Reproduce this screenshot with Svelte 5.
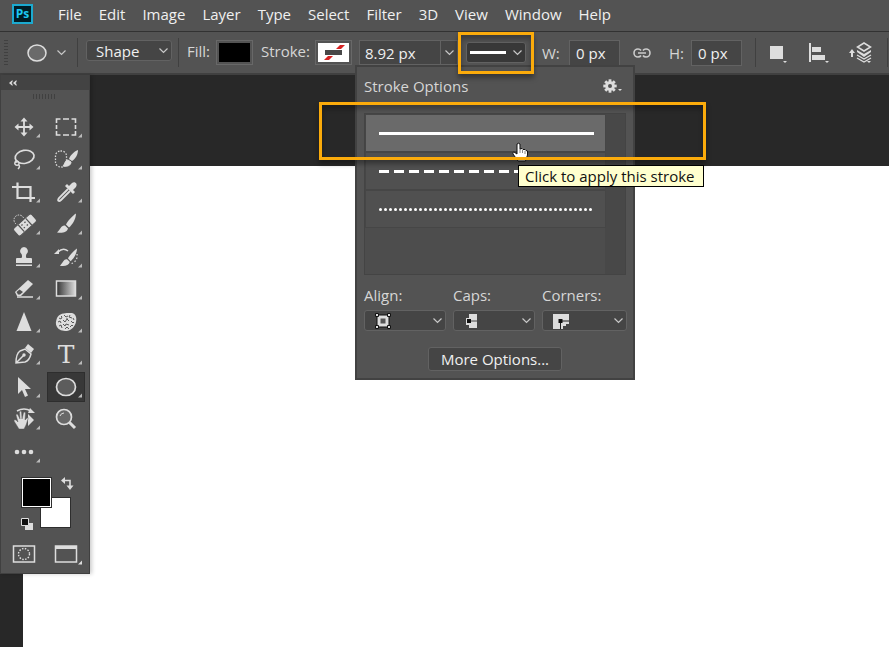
<script lang="ts">
    /**
     * Photo editor shell: menu bar, shape tool options, tool palette
     * and the stroke options popover.
     */

    const MENUS = [
        "File",
        "Edit",
        "Image",
        "Layer",
        "Type",
        "Select",
        "Filter",
        "3D",
        "View",
        "Window",
        "Help",
    ];

    const BRUSH =
        '<path d="M10-10.500C6-8 1-2 0 .500l3 3C6 1 10-5 10-10.500z"/><path d="M-1 1.500C-5 1-5 5-9 8.500c5 1 10 0 11-4z"/>';

    // Icon artwork is centred on 0,0
    const TOOLS: { name: string; art: string; single?: boolean }[] = [
        {
            name: "Move",
            art: '<path d="M-7 0H7M0-7V7" stroke="currentColor" stroke-width="1.800"/><path d="M0-9.500l3.500 4h-7zM0 9.500l3.500-4h-7zM-9.500 0l4-3.500v7zM9.500 0l-4-3.500v7z"/>',
        },
        {
            name: "Rectangular marquee",
            art: '<path d="M-9.500-4v-4h4M-3-8h6M5.500-8h4v4M9.500-2v4M9.500 4v4h-4M3 8h-6M-5.500 8h-4v-4M-9.500 2v-4" fill="none" stroke="currentColor" stroke-width="1.600"/>',
        },
        {
            name: "Lasso",
            art: '<ellipse cx="1" cy="-2" rx="9.500" ry="6.500" transform="rotate(-10)" fill="none" stroke="currentColor" stroke-width="1.700"/><path d="M-9 3c2-3 6 2 3 3s-5-3-1-3M-6 5c2 2 2 3 0 5" fill="none" stroke="currentColor" stroke-width="1.500"/>',
        },
        {
            name: "Quick selection",
            art: '<rect x="-10.500" y="-8" width="11" height="16" rx="5" fill="none" stroke="currentColor" stroke-width="1.300" stroke-dasharray="1.500 1.500"/><path d="M12-9C7-7 4-3 3 0l3 2C9 0 12-4 12-9z"/><path d="M2 1C-1 1-1 5-3 7c5 1 8-1 8-4z" stroke="currentColor" stroke-width="1"/>',
        },
        {
            name: "Crop",
            art: '<path d="M-12-5H6.500V10M-6.500-9.500V6H11" fill="none" stroke="currentColor" stroke-width="2.200"/>',
        },
        {
            name: "Eyedropper",
            art: '<path d="M2-3L-7 6c-2 3 0 4 2 2l9-9" fill="none" stroke="currentColor" stroke-width="1.800"/><path d="M-1-6l2-2 2 2 3-3c3-2 6 1 4 4L7-2l2 2-2 2z"/>',
        },
        {
            name: "Healing brush",
            art: '<circle cx="-5" cy="-4" r="5" fill="none" stroke="currentColor" stroke-dasharray="1.500 1.200"/><g transform="translate(1 1) rotate(-42)"><rect x="-12" y="-5" width="24" height="10" rx="2" stroke="#535353"/><path d="M-5-4.500v9M5-4.500v9" stroke="#535353" stroke-width="1.200"/><path d="M-3-2h1.500M1-2h1.500M-3 1.500h1.500M1 1.500h1.500" stroke="#535353" stroke-width="1.300"/></g>',
        },
        { name: "Brush", art: BRUSH },
        {
            name: "Clone stamp",
            art: '<path d="M0-10a4 4 0 0 1 2.500 7C1.500-1 2 1 3 1h4q1 0 1 1v4H-8V2q0-1 1-1h4c1 0 1.500-2 .500-4A4 4 0 0 1 0-10zM-8 7.500H8V9H-8z"/>',
        },
        {
            name: "History brush",
            art: `<g transform="translate(2 1) scale(.9)">${BRUSH}</g><path d="M-12-3l5-5v5z"/><path d="M-8-5q5-5 10-1" fill="none" stroke="currentColor" stroke-width="1.500"/><path d="M11-3Q12 5 4 7" fill="none" stroke="currentColor" stroke-width="1.200" stroke-dasharray="1.500 2"/>`,
        },
        {
            name: "Eraser",
            art: '<path d="M-9 3L4-9l5 4L-3 7h-4z"/><path d="M-7.500 3l3-2.500L-1 3-4 5.500h-2z" fill="#535353"/><path d="M-7 8H9" stroke="currentColor" stroke-width="1.500"/>',
        },
        {
            name: "Gradient",
            art: '<defs><linearGradient id="fade"><stop stop-color="#333"/><stop offset="1" stop-color="#ddd"/></linearGradient></defs><rect x="-9.500" y="-8" width="19" height="15" fill="url(#fade)" stroke="currentColor" stroke-width="1.500"/>',
        },
        { name: "Sharpen", art: '<path d="M0-10L7.500 9h-15z"/>' },
        {
            name: "Sponge",
            art: '<path d="M-9-4C-6-10 2-9 6-9c4 1 5 5 4 9S6 8 1 9C-4 9-7 8-9 5s-1-6 0-9z"/><path d="M-7-4l2 1 1-2M-2-7l2 2 2-1M4-7l-1 2 3 1M7-4l1 2M-8 0l2-1 1 2M-3-2l2 2 2-3 2 2M5-1l2 2 1-1M-7 4l2-1 1 3M-3 2l2 2 1-2 3 1M-1 7l2-2 2 2M4 5l2-2 1 1M-5-6l1 1M1-4v1" fill="none" stroke="#484848" stroke-width=".900"/>',
        },
        {
            name: "Pen",
            art: '<path d="M-8 9c0-6 1-10 4-12l5-2 6 5c-1 4-3 7-6 8zM-8 9L0 1" fill="none" stroke="currentColor" stroke-width="1.500"/><circle cx="0" cy="1" r="1.700"/><path d="M1-6l3-4 6 5-3 4z"/>',
        },
        {
            name: "Type",
            art: '<text y="9" text-anchor="middle" font-family="DejaVu Serif, serif" font-size="25">T</text>',
        },
        {
            name: "Path selection",
            art: '<path d="M-6-10V7l4-4 3 7 3-1.500L1 2h6z"/>',
        },
        {
            name: "Ellipse",
            art: '<ellipse rx="9.500" ry="8.500" fill="#5c5c5c" stroke="currentColor" stroke-width="1.700"/>',
        },
        {
            name: "Rotate view",
            art: '<path d="M-7-8Q0-12 7-8" fill="none" stroke="currentColor" stroke-width="1.500"/><path d="M6-11l5 5-7 0zM4-5l6 6-6 6z"/><path d="M-5 10l-5-8q0-2 2-1l2 2-2-7q1-2 2 0l2 4-.500-7q1-2 2 0l.500 7 1.500-6q1-2 2 0L1 1l2-2q2-1 1 1L2 6l-2 4z" stroke="#535353" stroke-width=".400"/>',
        },
        {
            name: "Zoom",
            art: '<circle cx="-2" cy="-2" r="7.500" fill="#686868" stroke="currentColor" stroke-width="1.700"/><path d="M3.500 3.500L9 9" stroke="currentColor" stroke-width="3"/><path d="M-6-3q1-3 4-3" fill="none" stroke="currentColor"/>',
            single: true,
        },
        {
            name: "Edit toolbar",
            art: '<circle cx="-7" r="2.300"/><circle r="2.300"/><circle cx="7" r="2.300"/>',
        },
    ];

    const STROKES = ["solid", "dashed", "dotted"];

    let activeTool = $state("Ellipse");
    let stroke = $state("solid");
    let strokeWidth = $state("8.92 px");
    let width = $state("0 px");
    let height = $state("0 px");
</script>

{#snippet chevron()}
    <svg class="chevron" width="9" height="6" viewBox="0 0 9 6" aria-hidden="true">
        <path d="M.5.5l4 4 4-4" fill="none" stroke="currentColor" stroke-width="1.2" />
    </svg>
{/snippet}

<div class="app">
    <nav class="menubar" aria-label="Main menu">
        <svg class="logo" width="21" height="20" viewBox="0 0 21 20" aria-hidden="true">
            <rect x="1" y="1" width="19" height="18" fill="#001d26" stroke="#1caad0" stroke-width="2" />
            <text x="10.500" y="14" text-anchor="middle">Ps</text>
        </svg>
        {#each MENUS as menu}
            <button>{menu}</button>
        {/each}
    </nav>

    <header class="options">
        <div class="grip"></div>
        <button class="preset" aria-label="Tool preset">
            <svg width="20" height="18" viewBox="0 0 20 18">
                <ellipse cx="10" cy="9" rx="9" ry="8" fill="#6a6a6a" stroke="#ddd" stroke-width="1.500" />
            </svg>
            {@render chevron()}
        </button>
        <div class="rule"></div>
        <div class="dropdown mode">
            <select aria-label="Tool mode">
                <option>Shape</option>
                <option>Path</option>
                <option>Pixels</option>
            </select>
            {@render chevron()}
        </div>
        <div class="rule"></div>
        <label class="fill-label" for="fill">Fill:</label>
        <button id="fill" class="paint" aria-label="Fill colour"><span></span></button>
        <label class="stroke-label" for="stroke">Stroke:</label>
        <button id="stroke" class="paint" aria-label="Stroke colour">
            <svg width="31" height="19" viewBox="0 0 31 19">
                <path d="M0 0h31v19H0z" fill="#fff" />
                <path d="M6 17l4-4h5l-4 4zM18 6l4-4h5l-4 4z" fill="#d62222" />
                <path d="M7 7h17v5H7z" fill="#484848" />
            </svg>
        </button>
        <div class="stroke-width">
            <input aria-label="Stroke width" bind:value={strokeWidth} />
            <button aria-label="Stroke width slider">{@render chevron()}</button>
        </div>

        <div class="stroke-type">
            <div class="dropdown line">
                <select aria-label="Stroke type" bind:value={stroke}>
                    {#each STROKES as kind}
                        <option value={kind} aria-label={kind}></option>
                    {/each}
                </select>
                <svg class="glyph" width="36" height="3" viewBox="0 0 36 3" aria-hidden="true">
                    <path d="M0 0h36v3H0z" fill="#fff" />
                </svg>
                {@render chevron()}
            </div>

            <section class="popover" aria-label="Stroke Options">
                <div class="popover-title">
                    <h2>Stroke Options</h2>
                    <button aria-label="Stroke settings">
                        <svg width="20" height="14" viewBox="0 0 20 14">
                            <g fill="#ddd" transform="translate(7 7)">
                                <circle r="4.800" />
                                {#each [0, 45, 90, 135] as angle}
                                    <rect x="-1.400" y="-6.700" width="2.800" height="13.400" transform="rotate({angle})" />
                                {/each}
                            </g>
                            <circle cx="7" cy="7" r="2" fill="#535353" />
                            <path d="M15 10h4l-2 2z" fill="#ddd" />
                        </svg>
                    </button>
                </div>

                <div class="strokes">
                    {#each STROKES as kind}
                        <button
                            class:selected={stroke === kind}
                            aria-label="{kind} stroke"
                            aria-pressed={stroke === kind}
                            onclick={() => (stroke = kind)}
                        >
                            <svg width="216" height="3" viewBox="0 0 216 3">
                                <path
                                    d={kind === "dotted" ? "M1.5 1.5H215" : "M0 1.5H215"}
                                    stroke="#fff"
                                    stroke-width="3"
                                    stroke-linecap={kind === "dotted" ? "round" : "butt"}
                                    stroke-dasharray={kind === "dashed" ? "10 5" : kind === "dotted" ? "0 5" : undefined}
                                />
                            </svg>
                        </button>
                    {/each}
                    <svg class="pointer" width="17" height="20" viewBox="0 0 17 20" aria-hidden="true">
                        <path
                            d="M5 2q1.500-1.500 3 0v5l2-.500 1 1 2 0 1 1 1.500.500V13l-2 6H6L1 12q-1-2 1-2l3 2z"
                            fill="#fff"
                            stroke="#111"
                        />
                        <path d="M8 7v4M10.500 8v3M13 9v3" stroke="#555" stroke-width=".700" />
                    </svg>
                    <div class="callout callout-row"></div>
                    <div class="tooltip" role="tooltip">Click to apply this stroke</div>
                </div>

                <div class="joins">
                    <label for="align">Align:</label>
                    <label for="caps">Caps:</label>
                    <label for="corners">Corners:</label>
                    <div class="dropdown">
                        <select id="align"><option aria-label="Center"></option></select>
                        <svg class="glyph" width="16" height="16" viewBox="0 0 16 16" aria-hidden="true">
                            <path d="M2 2h12v12H2z" fill="#ddd" stroke="#111" />
                            <path d="M5.500 5.500h5v5h-5z" fill="#555" />
                            <path d="M.500.500h3v3h-3zM12.500.500h3v3h-3zM.500 12.500h3v3h-3zM12.500 12.500h3v3h-3z" fill="#ddd" stroke="#111" />
                        </svg>
                        {@render chevron()}
                    </div>
                    <div class="dropdown">
                        <select id="caps"><option aria-label="Butt"></option></select>
                        <svg class="glyph" width="16" height="16" viewBox="0 0 16 16" aria-hidden="true">
                            <path d="M5 1h8v14H5v-3H2V5h3z" fill="#ddd" />
                            <path d="M6 8h7" stroke="#444" />
                            <path d="M3 6h4v4H3z" fill="#111" />
                        </svg>
                        {@render chevron()}
                    </div>
                    <div class="dropdown">
                        <select id="corners"><option aria-label="Miter"></option></select>
                        <svg class="glyph" width="16" height="16" viewBox="0 0 16 16" aria-hidden="true">
                            <path d="M0 1h16v10h-3v2h-3v3H0z" fill="#ddd" />
                            <path d="M7.500 16V8H16" fill="none" stroke="#222" />
                            <path d="M5.500 6h4v4h-4z" fill="#111" />
                        </svg>
                        {@render chevron()}
                    </div>
                </div>

                <button class="more">More Options...</button>
            </section>

            <div class="callout callout-type"></div>
        </div>

        <label class="w-label" for="w">W:</label>
        <input id="w" class="size" bind:value={width} />
        <button class="link" aria-label="Link width and height">
            <svg width="18" height="10" viewBox="0 0 18 10">
                <path
                    d="M8 2.500Q7 1 5 1a4 4 0 0 0 0 8q2 0 3-1.500M10 2.500Q11 1 13 1a4 4 0 0 1 0 8q-2 0-3-1.500M5 5h8"
                    fill="none"
                    stroke="#ccc"
                    stroke-width="1.600"
                />
            </svg>
        </button>
        <label class="h-label" for="h">H:</label>
        <input id="h" class="size" bind:value={height} />
        <div class="rule"></div>
        <div class="arrange">
            <button aria-label="Path operations">
                <svg width="20" height="22" viewBox="0 0 20 22">
                    <path d="M1 4h13v13H1zM14 19h4l-2 2z" fill="#ddd" />
                </svg>
            </button>
            <button aria-label="Path alignment">
                <svg width="20" height="22" viewBox="0 0 20 22">
                    <path d="M0 1h2v19H0zM3 5h9v5H3zM3 13h13v5H3zM16 19h4l-2 2z" fill="#ddd" />
                </svg>
            </button>
            <button aria-label="Path arrangement">
                <svg width="24" height="22" viewBox="0 0 24 22">
                    <path d="M15 1l6.500 4-6.500 4-6.500-4z" fill="none" stroke="#ddd" stroke-width="1.500" />
                    <path d="M8 8l7 4 7-4v2l-7 5-7-5zM3 7l3 4H4v4H2v-4H0zM18 19h4l-2 2z" fill="#ddd" />
                    <path d="M8 13l7 4 7-4M8 16l7 4 7-4" fill="none" stroke="#ddd" stroke-width="1.300" />
                </svg>
            </button>
        </div>
        <div class="rule"></div>
    </header>

    <main class="workspace">
        <div class="canvas"></div>

        <aside class="palette" aria-label="Tools">
            <button class="collapse" aria-label="Collapse palette">
                <svg width="8" height="6" viewBox="0 0 8 6">
                    <path d="M3.500 0v2L2.500 3l1 1v2L0 3zM7.500 0v2l-1 1 1 1v2L4 3z" fill="#ddd" />
                </svg>
            </button>
            <div class="palette-grip"></div>

            <div class="tools">
                {#each TOOLS as tool}
                    <button
                        class:active={activeTool === tool.name}
                        aria-label={tool.name}
                        aria-pressed={activeTool === tool.name}
                        onclick={() => (activeTool = tool.name)}
                    >
                        <svg width="36" height="28" viewBox="-18 -14 36 28" fill="currentColor">
                            {@html tool.art}
                            {#if !tool.single}
                                <path d="M16 6.500v4h-4z" fill="#bbb" />
                            {/if}
                        </svg>
                    </button>
                {/each}
            </div>

            <div class="colours">
                <button class="background" aria-label="Background colour"></button>
                <button class="foreground" aria-label="Foreground colour"></button>
                <button class="swap" aria-label="Swap colours">
                    <svg width="13" height="13" viewBox="0 0 13 13">
                        <path d="M3 3.500h6V9" fill="none" stroke="#ddd" stroke-width="1.600" />
                        <path d="M0 3.500L4 0v7zM9 13L5.500 8.500h7z" fill="#ddd" />
                    </svg>
                </button>
                <button class="reset" aria-label="Default colours">
                    <svg width="12" height="12" viewBox="0 0 12 12">
                        <path d="M4 5h8v7H4z" fill="#ddd" />
                        <path d="M.500.500h7v7h-7z" fill="#111" stroke="#ddd" />
                    </svg>
                </button>
            </div>

            <div class="modes">
                <button aria-label="Quick mask">
                    <svg width="36" height="24" viewBox="-18 -12 36 24">
                        <path d="M-10.500-8h21V8h-21z" fill="none" stroke="#ddd" stroke-width="1.500" />
                        <circle r="5.500" fill="none" stroke="#ddd" stroke-width="1.400" stroke-dasharray="1.500 1.400" />
                    </svg>
                </button>
                <button aria-label="Screen mode">
                    <svg width="36" height="24" viewBox="-18 -12 36 24">
                        <path d="M-10.500-8h21V8h-21z" fill="none" stroke="#ddd" stroke-width="1.500" />
                        <path d="M-10-8h20v3h-20zM16 6.500v4h-4z" fill="#ddd" />
                    </svg>
                </button>
            </div>
        </aside>
    </main>
</div>

<style>
    :global(body) {
        margin: 0;
    }

    .app {
        display: flex;
        flex-direction: column;
        min-height: 100vh;
        background: #282828;
        color: #d6d6d6;
        font: 15px/20px "Open Sans", sans-serif;
    }

    .app * {
        box-sizing: border-box;
    }

    button,
    input,
    select {
        margin: 0;
        padding: 0;
        border: 0;
        border-radius: 0;
        background: none;
        color: inherit;
        font: inherit;
    }

    button {
        display: block;
    }

    svg {
        display: block;
        flex: none;
    }

    .menubar {
        display: flex;
        align-items: center;
        gap: 17px;
        height: 32px;
        padding: 0 12px 3px;
        background: #535353;
        border-bottom: 1px solid #323232;
        color: #f0f0f0;
    }

    .logo {
        margin-right: 8px;
    }

    .logo text {
        fill: #1cc8f4;
        font: bold 12px "Open Sans", sans-serif;
    }

    .options {
        display: flex;
        align-items: center;
        height: 43px;
        background: #535353;
        border-bottom: 2px solid #404040;
    }

    .grip {
        width: 4px;
        height: 25px;
        margin-left: 4px;
        background: repeating-linear-gradient(#404040 0 1px, transparent 1px 3px);
    }

    .preset {
        display: flex;
        align-items: center;
        gap: 10px;
        margin: 0 11px 0 19px;
    }

    .chevron {
        color: #c8c8c8;
        pointer-events: none;
    }

    .rule {
        width: 1px;
        height: 29px;
        background: #404040;
    }

    .dropdown {
        position: relative;
        height: 21px;
    }

    .dropdown select {
        appearance: none;
        display: block;
        width: 100%;
        height: 100%;
        padding: 0 9px;
        background: #454545;
        border: 1px solid #626262;
        border-radius: 3px;
        color: #f0f0f0;
        line-height: 18px;
    }

    .dropdown .chevron {
        position: absolute;
        top: 8px;
        right: 4px;
    }

    .dropdown .glyph {
        position: absolute;
        top: 3px;
        left: 11px;
        pointer-events: none;
    }

    .mode {
        width: 86px;
        margin: 0 6px 4px 8px;
    }

    .fill-label {
        width: 29px;
        margin: 0 0 4px 8px;
    }

    .stroke-label {
        width: 54px;
        margin: 0 0 4px 8px;
    }

    .paint {
        width: 37px;
        height: 25px;
        padding: 2px;
        border: 1px solid #686868;
    }

    .paint span {
        display: block;
        height: 19px;
        background: #000;
    }

    .stroke-width {
        display: flex;
        width: 99px;
        height: 25px;
        margin-left: 7px;
        background: #454545;
        border: 1px solid #626262;
    }

    .stroke-width input {
        width: 80px;
        padding-left: 5px;
        color: #f0f0f0;
    }

    .stroke-width button {
        display: grid;
        place-items: center;
        width: 18px;
        border-left: 1px solid #626262;
    }

    .stroke-type {
        position: relative;
        width: 76px;
        height: 41px;
        padding: 10px 8px;
    }

    .line select {
        background: #383838;
    }

    .line .glyph {
        top: 9px;
        left: 4px;
    }

    .callout {
        position: absolute;
        border: 3px solid #fbab0b;
        box-shadow:
            0 4px 5px rgb(0 0 0 / 35%),
            inset 0 4px 5px rgb(0 0 0 / 30%);
        pointer-events: none;
    }

    .callout-type {
        inset: 0 0 -1px;
        z-index: 2;
    }

    .popover {
        position: absolute;
        top: 33px;
        left: -103px;
        z-index: 1;
        width: 280px;
        padding: 6px 7px 7px;
        background: #535353;
        border: 2px solid #424242;
    }

    .popover-title {
        display: flex;
        align-items: center;
        justify-content: space-between;
        height: 26px;
        margin-bottom: 14px;
        padding-right: 3px;
    }

    h2 {
        margin: 0;
        font-size: 15px;
        font-weight: 400;
    }

    .strokes {
        position: relative;
        display: flex;
        flex-direction: column;
        gap: 2px;
        height: 162px;
        padding: 1px 20px 0 1px;
        background: linear-gradient(to left, #484848 20px, #4d4d4d 20px);
        border: 1px solid #444;
    }

    .strokes > button {
        height: 36px;
        padding: 1px 0 0 13px;
        background: #505050;
        box-shadow: 0 0 0 1px #464646;
    }

    .strokes > button.selected {
        background: #6a6a6a;
    }

    .pointer {
        position: absolute;
        top: 28px;
        left: 147px;
    }

    .callout-row {
        top: -12px;
        right: -81px;
        left: -46px;
        height: 58px;
    }

    .tooltip {
        position: absolute;
        top: 51px;
        left: 153px;
        width: 186px;
        padding: 0 6px;
        background: #ffffce;
        border: 1px solid #000;
        color: #111;
        white-space: nowrap;
    }

    .joins {
        display: grid;
        grid-template-columns: 82px 82px 85px;
        column-gap: 7px;
        row-gap: 5px;
        padding-top: 10px;
    }

    .more {
        width: 134px;
        height: 24px;
        margin: 16px auto 0;
        background: #454545;
        border: 1px solid #626262;
        border-radius: 3px;
        color: #f0f0f0;
    }

    .w-label {
        width: 27px;
        margin-left: 8px;
    }

    .h-label {
        width: 22px;
    }

    .size {
        width: 51px;
        height: 26px;
        padding-left: 6px;
        background: #454545;
        border: 1px solid #626262;
        color: #f0f0f0;
    }

    .link {
        margin: 0 18px 0 13px;
    }

    .size + .rule {
        margin-left: 13px;
    }

    .arrange {
        display: flex;
        gap: 20px;
        margin: 0 14px 0 13px;
    }

    .workspace {
        display: grid;
        flex: 1;
    }

    .canvas {
        grid-area: 1 / 1;
        margin: 91px 0 0 23px;
        background: #fff;
    }

    .palette {
        grid-area: 1 / 1;
        place-self: start;
        width: 90px;
        padding-bottom: 7px;
        background: #535353;
        border: 1px solid #404040;
        border-top: 0;
        box-shadow: 2px 0 4px rgb(0 0 0 / 20%);
        color: #ddd;
    }

    .collapse {
        width: 100%;
        height: 15px;
        padding-left: 8px;
        background: #434343;
    }

    .palette-grip {
        width: 24px;
        height: 5px;
        margin: 4px 0 11px 32px;
        background: repeating-linear-gradient(to right, #404040 0 1px, transparent 1px 3px);
    }

    .tools {
        display: grid;
        grid-template-columns: 42px 42px;
        grid-template-rows: repeat(5, 33px 32px) 33px;
        align-items: center;
        justify-items: center;
        padding-left: 2px;
    }

    .tools button {
        border: 1px solid transparent;
        color: #ddd;
    }

    .tools button.active {
        background: #383838;
        border-color: #2e2e2e;
    }

    .colours {
        display: grid;
        grid-template-columns: 19px 12px 22px;
        grid-template-rows: 20px 11px 9px 13px;
        margin: 9px 0 0 20px;
    }

    .foreground,
    .background {
        width: 31px;
        height: 31px;
        border: 1px solid #2e2e2e;
    }

    .foreground {
        grid-area: 1 / 1 / 3 / 3;
        background: #000;
        box-shadow: inset 0 0 0 1px #fff;
    }

    .background {
        grid-area: 2 / 2 / 4 / 4;
        background: #fff;
    }

    .swap {
        grid-area: 1 / 3;
        place-self: start end;
    }

    .reset {
        grid-area: 4 / 1;
    }

    .modes {
        display: flex;
        gap: 6px;
        margin-top: 12px;
        padding-left: 5px;
    }
</style>
